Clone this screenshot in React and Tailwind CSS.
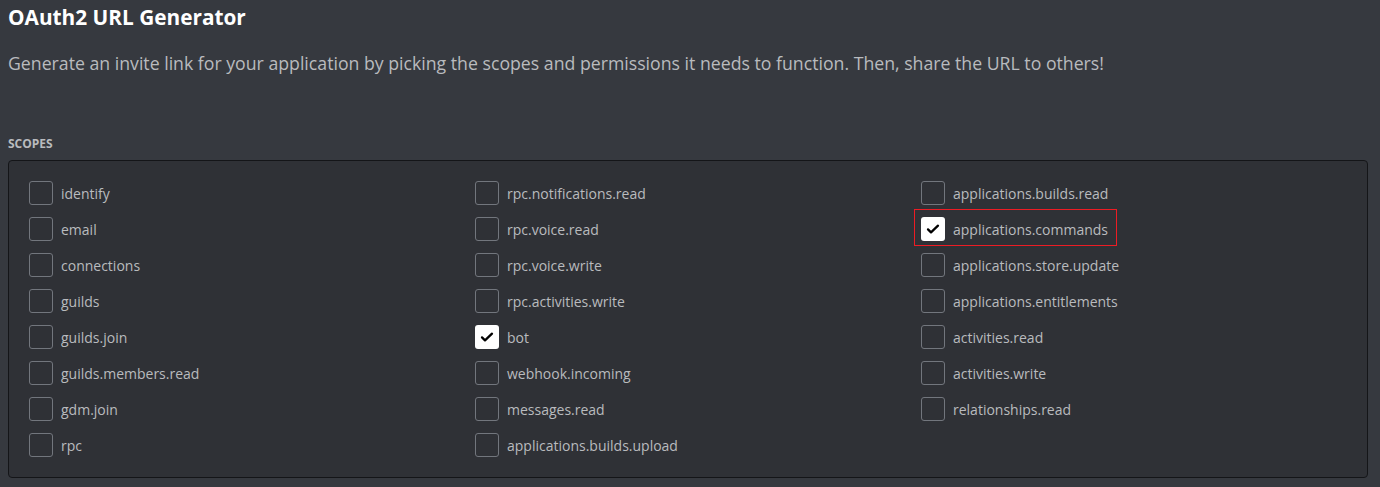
import React from "react";

const cols = [
  ["identify", "email", "connections", "guilds", "guilds.join", "guilds.members.read", "gdm.join", "rpc"],
  ["rpc.notifications.read", "rpc.voice.read", "rpc.voice.write", "rpc.activities.write", "bot", "webhook.incoming", "messages.read", "applications.builds.upload"],
  ["applications.builds.read", "applications.commands", "applications.store.update", "applications.entitlements", "activities.read", "activities.write", "relationships.read"],
];

const checked = new Set(["bot", "applications.commands"]);

function Box({ on }) {
  if (on) {
    return (
      <div className="w-6 h-6 rounded-[3px] bg-white flex items-center justify-center shrink-0">
        <svg width="16" height="16" viewBox="0 0 24 24" fill="none">
          <path d="M4.5 12.5l4.5 4.5L19.5 7" stroke="#000" strokeWidth="3.4" strokeLinecap="round" strokeLinejoin="round" />
        </svg>
      </div>
    );
  }
  return <div className="w-6 h-6 rounded-[3px] border border-[#72767d] shrink-0" />;
}

function Item({ label }) {
  const on = checked.has(label);
  const highlight = label === "applications.commands";
  return (
    <div className="relative flex items-center gap-2 h-6">
      {highlight && (
        <div className="absolute left-[-7px] top-[-8px] w-[203px] h-[37px] border border-[#ed1c24] pointer-events-none" />
      )}
      <Box on={on} />
      <span className="text-[14px] text-[#b9bbbe] leading-6 whitespace-nowrap pt-px">{label}</span>
    </div>
  );
}

export default function App() {
  return (
    <div
      className="w-[1380px] h-[487px] bg-[#36393f] px-2 overflow-hidden"
      style={{ fontFamily: '"Open Sans", "Noto Sans", sans-serif' }}
    >
      <h1 className="text-[20.8px] font-bold text-white leading-7 pt-[3px]">OAuth2 URL Generator</h1>
      <p className="text-[17.7px] text-[#b9bbbe] leading-6 mt-[20px]">
        Generate an invite link for your application by picking the scopes and permissions it needs to function. Then, share the URL to others!
      </p>
      <div className="mt-[61px] text-[12px] font-bold uppercase text-[#b9bbbe] leading-4">Scopes</div>
      <div className="mt-[8px] w-[1360px] h-[318px] bg-[#2f3136] border border-[#141518] rounded-[4px] pl-5 pt-5 grid grid-cols-3">
        {cols.map((c, i) => (
          <div key={i} className="flex flex-col gap-3">
            {c.map((l) => (
              <Item key={l} label={l} />
            ))}
          </div>
        ))}
      </div>
    </div>
  );
}
